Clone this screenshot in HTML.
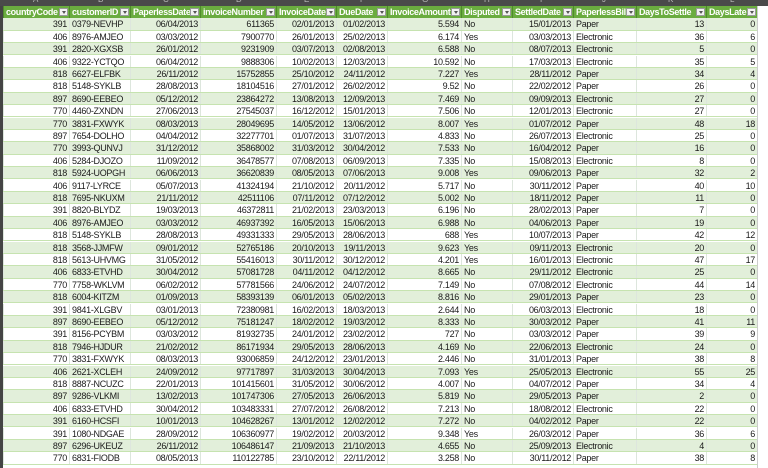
<!DOCTYPE html><html><head><style>
body{margin:0;width:768px;height:468px;overflow:hidden;background:#fff;font-family:"Liberation Sans",sans-serif;position:relative}
.top{position:absolute;left:0;top:0;width:768px;height:6px;background:#4a4a4a;}
.top span{position:absolute;top:-5px;font-size:8px;color:#bbb;}
.side{position:absolute;left:0;top:6px;width:3px;height:462px;background:#444;}
.row{position:absolute;left:3px;width:754px;height:12.4px;box-sizing:border-box;border-bottom:1px solid #c6e3b0;font-size:9px;letter-spacing:-0.3px;color:#1a1a1a;line-height:12px}
.row.g{background:#e2efda}
.c{position:absolute;top:0;height:100%;white-space:nowrap;overflow:hidden;box-sizing:border-box;padding:0 2px;border-left:1px solid #dde6dd}
.r{text-align:right}
.hdr{position:absolute;left:3px;top:6px;width:754px;height:12.3px;background:#6aac3f;color:#fff;font-weight:bold;font-size:9px;letter-spacing:-0.35px;line-height:12.3px}
.hdr .c{border-left:1px solid #4f8a2c;padding-right:12px}
.hdr i{position:absolute;right:1px;top:2px;width:9px;height:8px;background:#f2f2f2;border:1px solid #999;box-sizing:border-box}
.hdr i:after{content:"";position:absolute;left:2px;top:2px;border-left:2px solid transparent;border-right:2px solid transparent;border-top:3px solid #555}
.vr{position:absolute;left:757px;top:6px;width:1px;height:462px;background:#ccc}
</style></head><body>
<div class="top"><span style="left:33px">A</span><span style="left:98px">B</span><span style="left:163px">C</span><span style="left:236px">D</span><span style="left:304px">E</span><span style="left:360px">F</span><span style="left:422px">G</span><span style="left:484px">H</span><span style="left:540px">I</span><span style="left:602px">J</span><span style="left:668px">K</span><span style="left:730px">L</span></div>
<div class="side"></div>
<div class="vr"></div>
<div id="w"></div>
<script>
const d=`391|0379-NEVHP|06/04/2013|611365|02/01/2013|01/02/2013|5.594|No|15/01/2013|Paper|13|0
406|8976-AMJEO|03/03/2012|7900770|26/01/2013|25/02/2013|6.174|Yes|03/03/2013|Electronic|36|6
391|2820-XGXSB|26/01/2012|9231909|03/07/2013|02/08/2013|6.588|No|08/07/2013|Electronic|5|0
406|9322-YCTQO|06/04/2012|9888306|10/02/2013|12/03/2013|10.592|No|17/03/2013|Electronic|35|5
818|6627-ELFBK|26/11/2012|15752855|25/10/2012|24/11/2012|7.227|Yes|28/11/2012|Paper|34|4
818|5148-SYKLB|28/08/2013|18104516|27/01/2012|26/02/2012|9.52|No|22/02/2012|Paper|26|0
897|8690-EEBEO|05/12/2012|23864272|13/08/2013|12/09/2013|7.469|No|09/09/2013|Electronic|27|0
770|4460-ZXNDN|27/06/2013|27545037|16/12/2012|15/01/2013|7.506|No|12/01/2013|Electronic|27|0
770|3831-FXWYK|08/03/2013|28049695|14/05/2012|13/06/2012|8.007|Yes|01/07/2012|Paper|48|18
897|7654-DOLHO|04/04/2012|32277701|01/07/2013|31/07/2013|4.833|No|26/07/2013|Electronic|25|0
770|3993-QUNVJ|31/12/2012|35868002|31/03/2012|30/04/2012|7.533|No|16/04/2012|Paper|16|0
406|5284-DJOZO|11/09/2012|36478577|07/08/2013|06/09/2013|7.335|No|15/08/2013|Electronic|8|0
818|5924-UOPGH|06/06/2013|36620839|08/05/2013|07/06/2013|9.008|Yes|09/06/2013|Paper|32|2
406|9117-LYRCE|05/07/2013|41324194|21/10/2012|20/11/2012|5.717|No|30/11/2012|Paper|40|10
818|7695-NKUXM|21/11/2012|42511106|07/11/2012|07/12/2012|5.002|No|18/11/2012|Paper|11|0
391|8820-BLYDZ|19/03/2013|46372811|21/02/2013|23/03/2013|6.196|No|28/02/2013|Paper|7|0
406|8976-AMJEO|03/03/2012|46937392|16/05/2013|15/06/2013|6.988|No|04/06/2013|Paper|19|0
818|5148-SYKLB|28/08/2013|49331333|29/05/2013|28/06/2013|688|Yes|10/07/2013|Paper|42|12
818|3568-JJMFW|09/01/2012|52765186|20/10/2013|19/11/2013|9.623|Yes|09/11/2013|Electronic|20|0
818|5613-UHVMG|31/05/2012|55416013|30/11/2012|30/12/2012|4.201|Yes|16/01/2013|Electronic|47|17
406|6833-ETVHD|30/04/2012|57081728|04/11/2012|04/12/2012|8.665|No|29/11/2012|Electronic|25|0
770|7758-WKLVM|06/02/2012|57781566|24/06/2012|24/07/2012|7.149|No|07/08/2012|Electronic|44|14
818|6004-KITZM|01/09/2013|58393139|06/01/2013|05/02/2013|8.816|No|29/01/2013|Paper|23|0
391|9841-XLGBV|03/01/2013|72380981|16/02/2013|18/03/2013|2.644|No|06/03/2013|Electronic|18|0
897|8690-EEBEO|05/12/2012|75181247|18/02/2012|19/03/2012|8.333|No|30/03/2012|Paper|41|11
391|8156-PCYBM|03/03/2012|81932735|24/01/2012|23/02/2012|727|No|03/03/2012|Paper|39|9
818|7946-HJDUR|21/02/2012|86171934|29/05/2013|28/06/2013|4.169|No|22/06/2013|Electronic|24|0
770|3831-FXWYK|08/03/2013|93006859|24/12/2012|23/01/2013|2.446|No|31/01/2013|Paper|38|8
406|2621-XCLEH|24/09/2012|97717897|31/03/2013|30/04/2013|7.093|Yes|25/05/2013|Electronic|55|25
818|8887-NCUZC|22/01/2013|101415601|31/05/2012|30/06/2012|4.007|No|04/07/2012|Paper|34|4
897|9286-VLKMI|13/02/2013|101747306|27/05/2013|26/06/2013|5.819|No|29/05/2013|Paper|2|0
406|6833-ETVHD|30/04/2012|103483331|27/07/2012|26/08/2012|7.213|No|18/08/2012|Electronic|22|0
391|6160-HCSFI|10/01/2013|104628267|13/01/2012|12/02/2012|7.272|No|04/02/2012|Paper|22|0
391|1080-NDGAE|28/09/2012|106360977|19/02/2012|20/03/2012|9.348|Yes|26/03/2012|Paper|36|6
897|6296-UKEUZ|26/11/2012|106486147|21/09/2013|21/10/2013|4.655|No|25/09/2013|Electronic|4|0
770|6831-FIODB|08/05/2013|110122785|23/10/2012|22/11/2012|3.258|No|30/11/2012|Paper|38|8`;
const b=[3,69,130,200,276,336,387,461,512,573,636,706,757];
const right=[1,0,1,1,1,1,1,0,1,0,1,1];
const hd=['countryCode','customerID','PaperlessDate','invoiceNumber','InvoiceDate','DueDate','InvoiceAmount','Disputed','SettledDate','PaperlessBill','DaysToSettle','DaysLate'];
const cell=(i,v,cls)=>`<div class="c${cls}" style="left:${b[i]-3}px;width:${b[i+1]-b[i]}px">${v}</div>`;
let h='<div class="hdr">'+hd.map((v,i)=>cell(i,v+'<i></i>','')).join('')+'</div>';
d.split('\n').forEach((l,k)=>{h+=`<div class="row${k%2?'':' g'}" style="top:${(18.3+k*12.4).toFixed(2)}px">`+l.split('|').map((v,i)=>cell(i,v,right[i]?' r':'')).join('')+'</div>';});
document.getElementById('w').innerHTML=h;
</script>
</body></html>
